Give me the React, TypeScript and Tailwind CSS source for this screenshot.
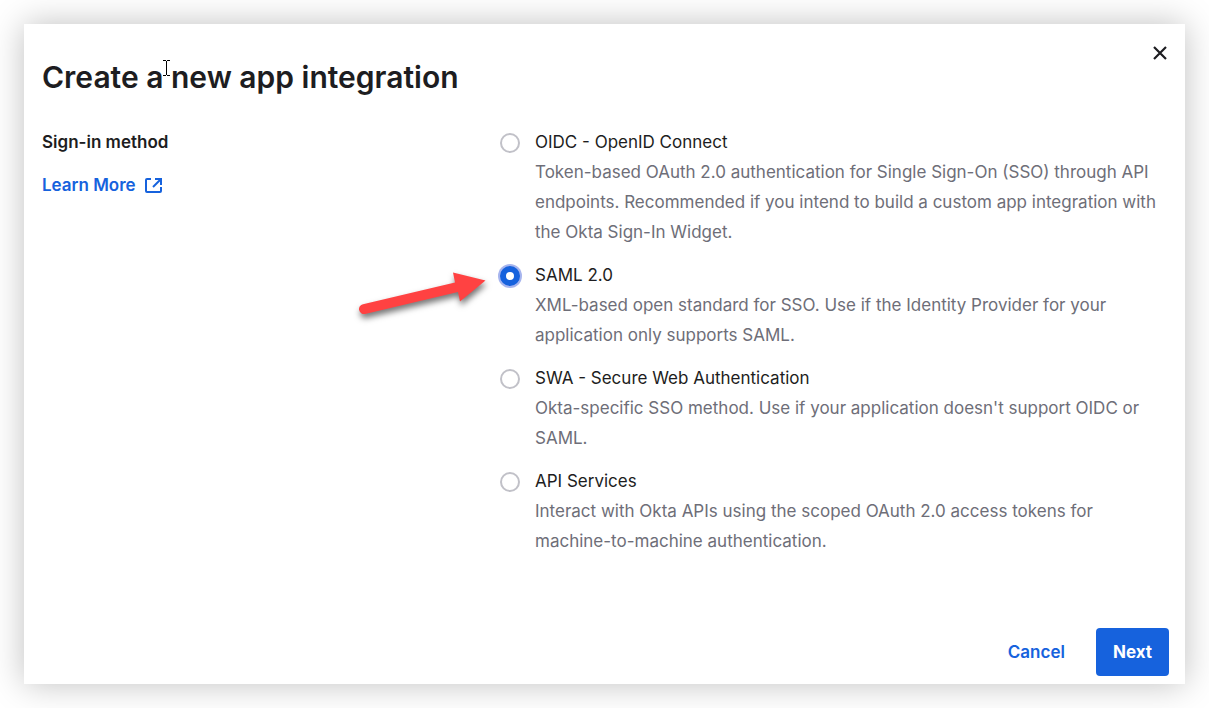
import { useState } from 'react';

const methods = [
  {
    id: 'oidc',
    label: 'OIDC - OpenID Connect',
    description:
      'Token-based OAuth 2.0 authentication for Single Sign-On (SSO) through API endpoints. Recommended if you intend to build a custom app integration with the Okta Sign-In Widget.',
  },
  {
    id: 'saml',
    label: 'SAML 2.0',
    description:
      'XML-based open standard for SSO. Use if the Identity Provider for your application only supports SAML.',
  },
  {
    id: 'swa',
    label: 'SWA - Secure Web Authentication',
    description:
      "Okta-specific SSO method. Use if your application doesn't support OIDC or SAML.",
  },
  {
    id: 'api',
    label: 'API Services',
    description:
      'Interact with Okta APIs using the scoped OAuth 2.0 access tokens for machine-to-machine authentication.',
  },
];

function ExternalIcon() {
  return (
    <svg width="18" height="16" viewBox="0 0 18 16" fill="none" stroke="currentColor" strokeWidth="2" aria-hidden="true">
      <path d="M7 2H3a1 1 0 0 0-1 1v11a1 1 0 0 0 1 1h13a1 1 0 0 0 1-1v-4" />
      <path d="M9 10 16 3" />
      <path d="M11 2h6v6" />
    </svg>
  );
}

function CloseIcon() {
  return (
    <svg width="14" height="14" viewBox="0 0 14 14" fill="none" stroke="currentColor" strokeWidth="2.2" aria-hidden="true">
      <path d="M1 1l12 12M13 1L1 13" />
    </svg>
  );
}

function Arrow() {
  return (
    <svg className="absolute top-[10px] right-full mr-[6px] w-[134px] h-[60px] overflow-visible pointer-events-none" viewBox="0 0 134 60" aria-hidden="true">
      <g fill="#ff4242" className="drop-shadow-[1px_4px_3px_rgba(0,0,0,0.55)]">
        <path d="M3 34.2 95 12.5 93 2.500 125.500 10.500 100 31.500 98 22 5 44A5 5 0 0 1 3 34.200Z" />
      </g>
    </svg>
  );
}

export default function App() {
  const [method, setMethod] = useState('saml');

  return (
    <main className="bg-white p-6 font-['Inter','Liberation_Sans',sans-serif] text-[17px] leading-[30px] text-[#1d1d21]">
      <section
        role="dialog"
        aria-labelledby="dialog-title"
        className="relative bg-white pl-[18px] pr-4 pt-[33px] pb-2 shadow-[0_0_32px_rgba(0,0,0,0.25)]"
      >
        <button type="button" aria-label="Close" className="absolute top-5 right-4 p-[2px]">
          <CloseIcon />
        </button>

        <h1 id="dialog-title" className="text-[30px] leading-[40px] font-semibold">
          Create a new app integration
        </h1>
        {/* text cursor */}
        <svg className="absolute top-9 left-[139px] w-[7px] h-4" viewBox="0 0 7 16" fill="none" stroke="#000" aria-hidden="true">
          <path d="M0 .5h3M4 .5h3M3.5 1v14M0 15.5h3M4 15.5h3" />
        </svg>

        <fieldset className="mt-[30px] grid grid-cols-[2fr_3fr] gap-3">
          <div>
            <h2 id="method-title" className="font-semibold">Sign-in method</h2>
            <a href="#learn-more" className="mt-[13px] inline-flex items-center gap-2 font-semibold text-[#1662dd]">
              Learn More
              <ExternalIcon />
            </a>
          </div>

          <div role="radiogroup" aria-labelledby="method-title" className="flex flex-col gap-[13px]">
            {methods.map((m) => (
              <div key={m.id} className="relative flex items-start gap-[15px]">
                <input
                  type="radio"
                  id={m.id}
                  name="method"
                  checked={method === m.id}
                  onChange={() => setMethod(m.id)}
                  aria-describedby={`${m.id}-desc`}
                  className="mt-[6px] size-5 shrink-0 appearance-none rounded-full border-2 border-[#c1c1c8] bg-white checked:border-[6px] checked:border-[#1662dd] checked:ring-2 checked:ring-[#a7b5ee]"
                />
                <div>
                  <label htmlFor={m.id}>{m.label}</label>
                  <p id={`${m.id}-desc`} className="text-[#6e6e78]">{m.description}</p>
                </div>
                {m.id === 'saml' && <Arrow />}
              </div>
            ))}
          </div>
        </fieldset>

        <div className="mt-[72px] flex items-center justify-end gap-[14px]">
          <button type="button" className="h-12 px-[17px] font-semibold text-[#1662dd]">Cancel</button>
          <button type="button" className="h-12 rounded bg-[#1662dd] px-[17px] font-bold text-white">Next</button>
        </div>
      </section>
    </main>
  );
}
